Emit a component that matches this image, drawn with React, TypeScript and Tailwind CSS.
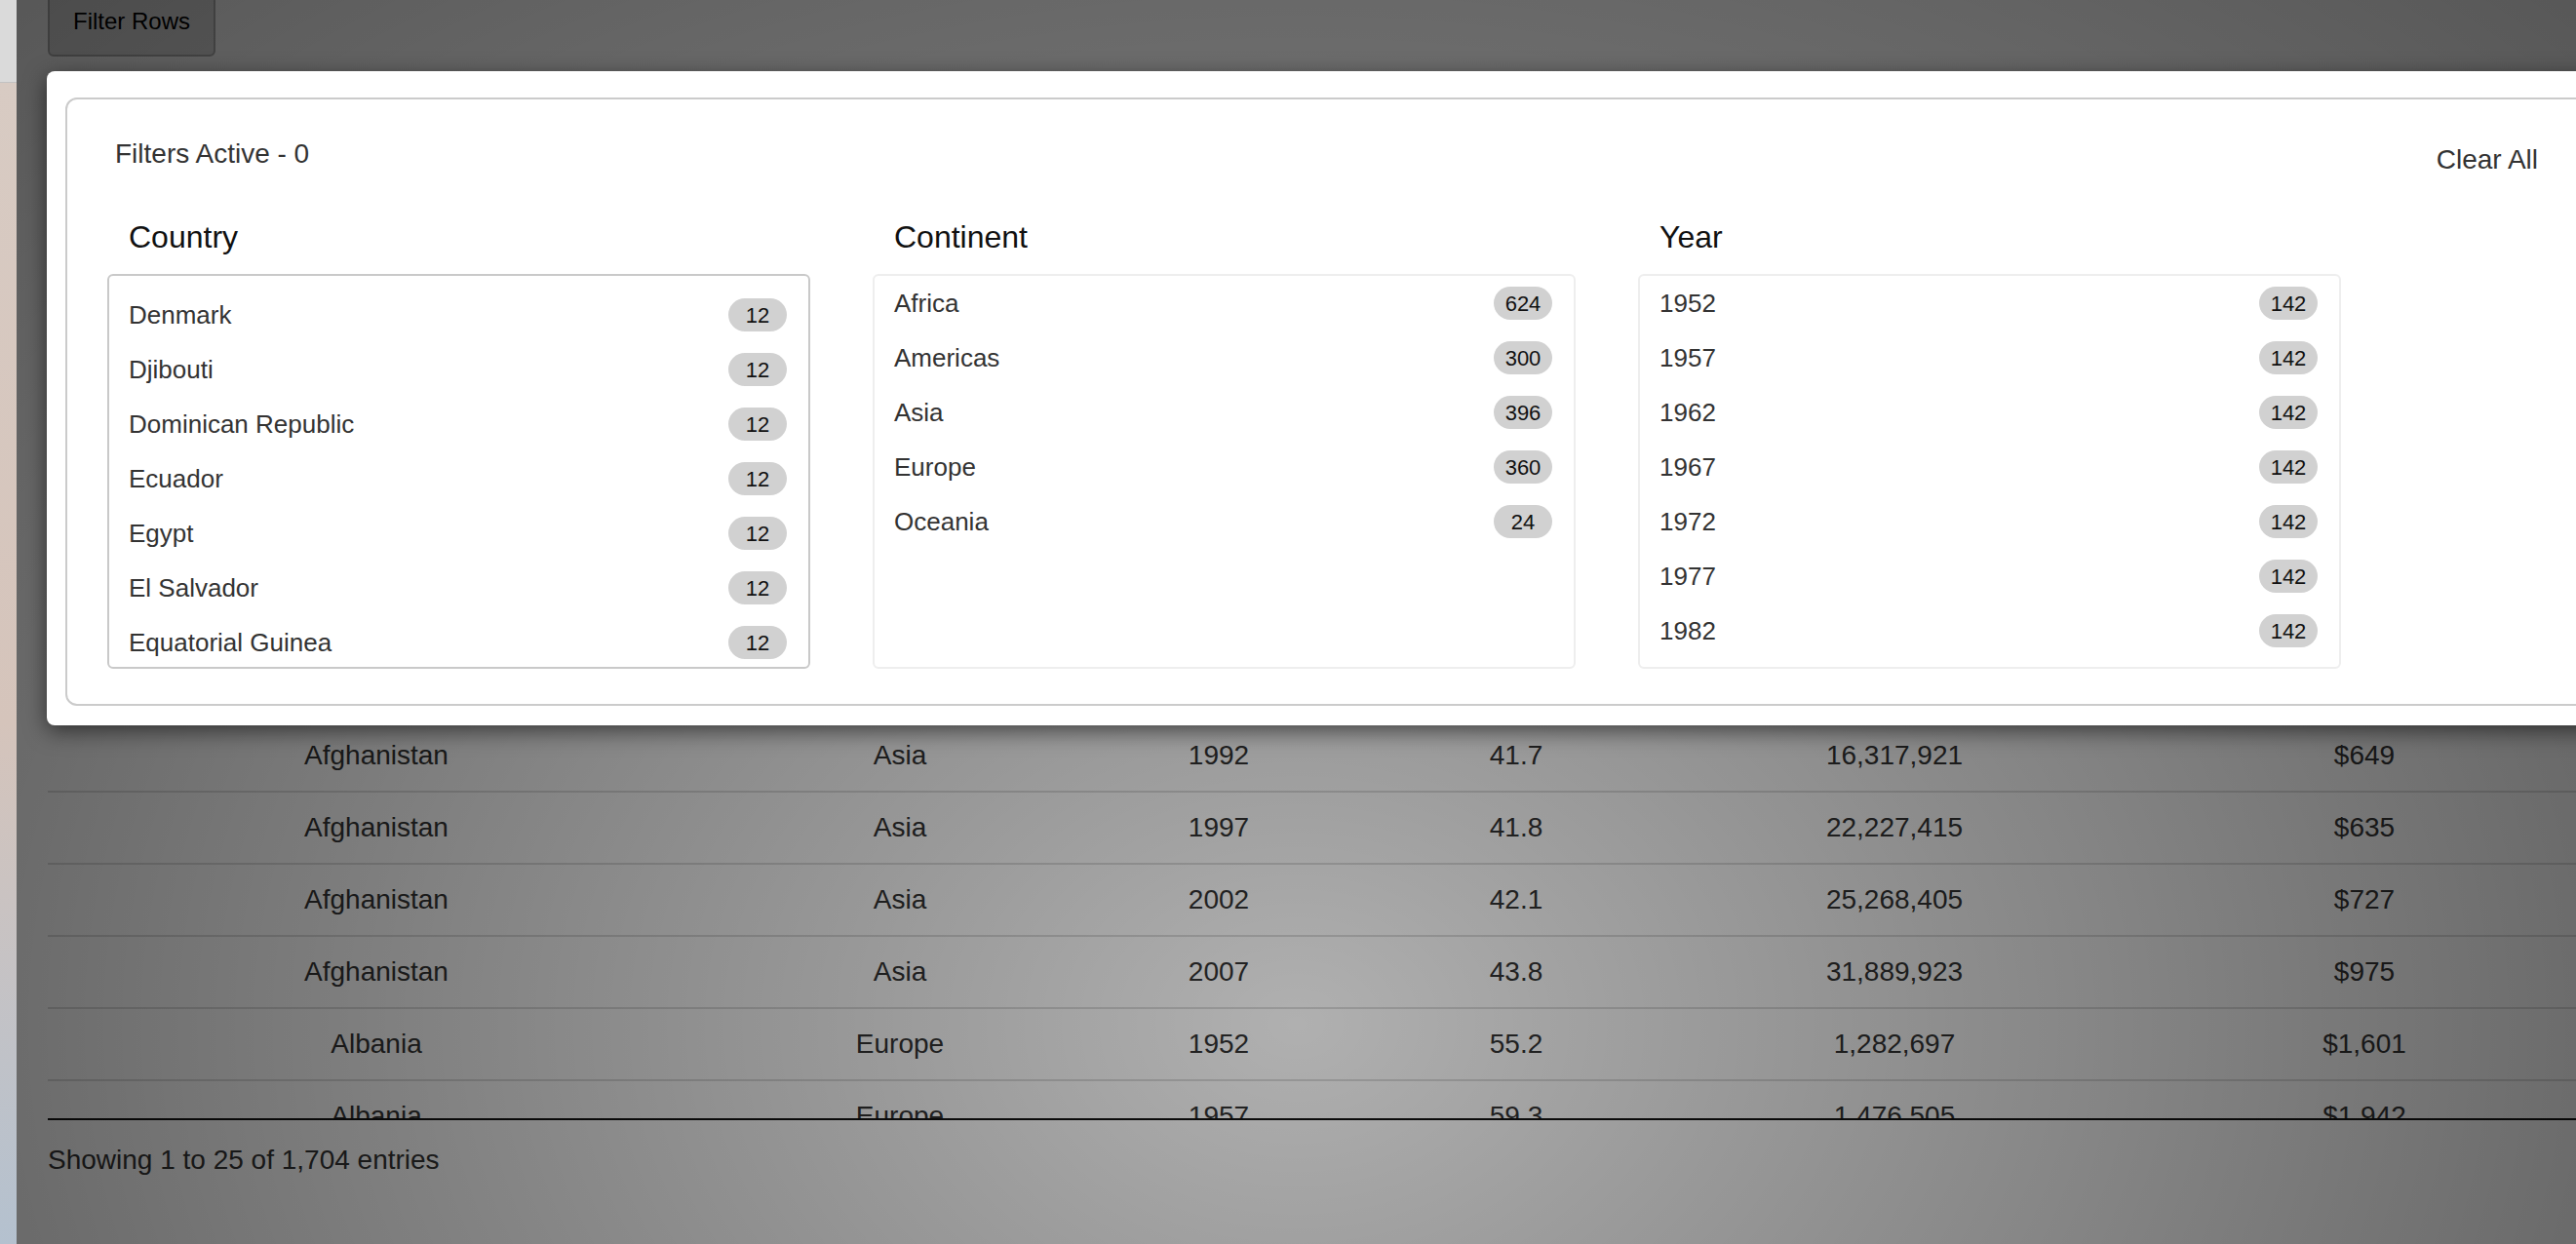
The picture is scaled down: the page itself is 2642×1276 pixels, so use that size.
import React from "react";

const countries = [
  "Denmark",
  "Djibouti",
  "Dominican Republic",
  "Ecuador",
  "Egypt",
  "El Salvador",
  "Equatorial Guinea",
];
const continents: [string, string][] = [
  ["Africa", "624"],
  ["Americas", "300"],
  ["Asia", "396"],
  ["Europe", "360"],
  ["Oceania", "24"],
];
const years = ["1952", "1957", "1962", "1967", "1972", "1977", "1982", "1987"];

const rows: string[][] = [
  ["Afghanistan", "Asia", "1992", "41.7", "16,317,921", "$649"],
  ["Afghanistan", "Asia", "1997", "41.8", "22,227,415", "$635"],
  ["Afghanistan", "Asia", "2002", "42.1", "25,268,405", "$727"],
  ["Afghanistan", "Asia", "2007", "43.8", "31,889,923", "$975"],
  ["Albania", "Europe", "1952", "55.2", "1,282,697", "$1,601"],
  ["Albania", "Europe", "1957", "59.3", "1,476,505", "$1,942"],
];

const gridCols = "grid grid-cols-[674px_400px_254px_356px_420px_544px]";

function Badge({ n }: { n: string }) {
  return (
    <span className="w-[60px] h-[34px] rounded-full bg-[#d1d1d1] text-[22px] text-[#111] flex items-center justify-center">
      {n}
    </span>
  );
}

function Item({ label, n }: { label: string; n: string }) {
  return (
    <div className="h-[56px] shrink-0 flex items-center justify-between pl-[20px] pr-[22px]">
      <span className="text-[26px] text-[#333]">{label}</span>
      <Badge n={n} />
    </div>
  );
}

function Column({
  title,
  children,
  boxClass,
}: {
  title: string;
  children: React.ReactNode;
  boxClass: string;
}) {
  return (
    <div className="w-[721px] shrink-0 flex flex-col">
      <div className="pl-[22px] text-[32px] leading-[37px] text-[#111] mb-[19px]">{title}</div>
      <div className={"h-[405px] border-2 rounded-[6px] overflow-hidden flex flex-col " + boxClass}>
        {children}
      </div>
    </div>
  );
}

export default function App() {
  return (
    <div className="w-[2642px] h-[1276px] overflow-hidden flex bg-white font-['Liberation_Sans',Arial,Helvetica,sans-serif]">
      {/* left strip */}
      <div className="w-[17px] shrink-0 flex flex-col">
        <div className="h-[85px] bg-[#dadada] border-b border-[#c2c2c2]" />
        <div className="flex-1 bg-[linear-gradient(to_bottom,#d8cbc3,#d5c4bb_55%,#b4c1cf)]" />
      </div>

      {/* main page */}
      <div className="relative flex-1 overflow-hidden">
        <div className="pl-[32px] flex flex-col">
          <button className="-mt-[5px] w-[172px] h-[63px] bg-[#dcdcdc] border-2 border-[#b0b0b0] rounded-[6px] text-[24px] text-black flex items-end justify-center pb-[16px]">
            Filter Rows
          </button>

          <div className="mt-[15px] h-[1076px] overflow-hidden border-b-2 border-[#111] w-[2700px] flex flex-col">
            {/* header and earlier rows lie under the modal */}
            <div className="h-[74px] shrink-0 border-b-2 border-[#111]" />
            {Array.from({ length: 8 }).map((_, i) => (
              <div key={"h" + i} className="h-[74px] shrink-0 border-b-2 border-[#dddddd]" />
            ))}
            {rows.map((r, i) => (
              <div
                key={i}
                className={gridCols + " h-[74px] shrink-0 items-center text-[28px] text-[#333] border-b-2 border-[#dddddd]"}
              >
                {r.map((c, j) => (
                  <div key={j} className="text-center">
                    {c}
                  </div>
                ))}
              </div>
            ))}
          </div>

          <div className="mt-[21px] text-[28px] leading-[40px] text-[#333]">Showing 1 to 25 of 1,704 entries</div>
        </div>

        {/* overlay */}
        <div className="absolute inset-0 bg-[radial-gradient(1330px_1000px_at_1313px_1050px,rgba(0,0,0,0.31)_0%,rgba(0,0,0,0.58)_100%,rgba(0,0,0,0.66)_145%)]" />

        {/* modal */}
        <div className="absolute left-[31px] top-[73px] w-[2680px] bg-white rounded-[8px] shadow-[0_6px_22px_rgba(0,0,0,0.55)] pt-[27px] pl-[19px] pr-[19px] pb-[20px]">
          <div className="border-2 border-[#cbcbcb] rounded-[12px] pl-[41px] pt-[36px] pb-[36px]">
            <div className="h-[40px] flex justify-between pl-[8px] pr-[104px]">
              <span className="text-[28px] leading-[40px] text-[#333]">Filters Active - 0</span>
              <span className="mt-[6px] text-[28px] leading-[40px] text-[#333]">Clear All</span>
            </div>
            <div className="mt-[47px] flex gap-[64px]">
              <Column title="Country" boxClass="border-[#c9c9c9] pt-[12px]">
                {countries.map((c) => (
                  <Item key={c} label={c} n="12" />
                ))}
              </Column>
              <Column title="Continent" boxClass="border-[#eeeeee]">
                {continents.map(([c, n]) => (
                  <Item key={c} label={c} n={n} />
                ))}
              </Column>
              <Column title="Year" boxClass="border-[#eeeeee]">
                {years.map((y) => (
                  <Item key={y} label={y} n="142" />
                ))}
              </Column>
            </div>
          </div>
        </div>
      </div>
    </div>
  );
}
